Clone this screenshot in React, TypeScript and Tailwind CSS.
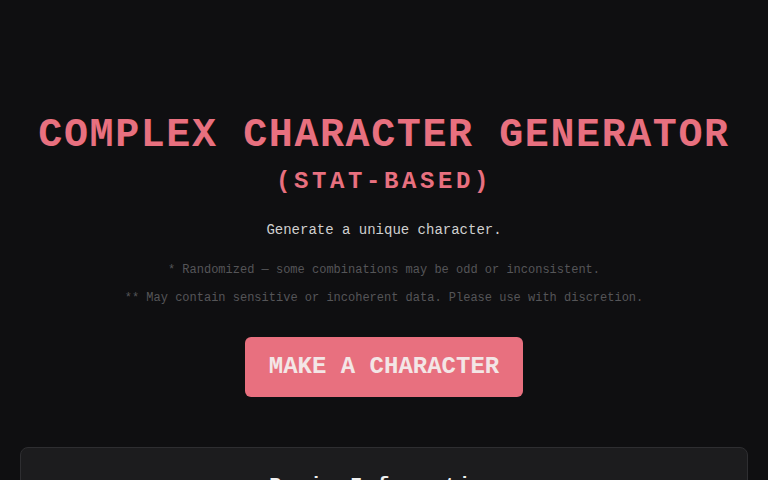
const mono = "font-['Courier_New','Courier','Liberation_Mono',monospace]";

export default function App() {
  return (
    <div className={`min-h-screen bg-[#0f0f11] ${mono} pt-[112px] pb-10`}>
      <header className="flex flex-col items-center text-center">
        <h1 className="text-[40px] leading-[48px] font-bold tracking-[0.04em] text-[#e8707f]">
          COMPLEX CHARACTER GENERATOR
        </h1>
        <h2 className="mt-[6px] text-2xl leading-8 font-bold tracking-[0.15em] text-[#e8707f]">
          (STAT-BASED)
        </h2>
        <p className="mt-[22px] text-sm leading-5 text-[#cfcfcf]">
          Generate a unique character.
        </p>
        <p className="mt-[22px] text-xs leading-4 text-[#555558]">
          * Randomized — some combinations may be odd or inconsistent.
        </p>
        <p className="mt-3 text-xs leading-4 text-[#555558]">
          ** May contain sensitive or incoherent data. Please use with discretion.
        </p>
        <button className="mt-[31px] h-[60px] rounded-md bg-[#e8707f] px-6 text-2xl font-bold text-[#f3e6e6]">
          MAKE A CHARACTER
        </button>
      </header>

      <section className="mx-5 mt-[50px] rounded-lg border border-[#2e2e31] bg-[#1c1c1e] px-5 pt-6 pb-5">
        <h3 className="text-center text-xl leading-7 font-bold tracking-[0.075em] text-[#f0f0f0]">
          Basic Information
        </h3>
      </section>
    </div>
  );
}
